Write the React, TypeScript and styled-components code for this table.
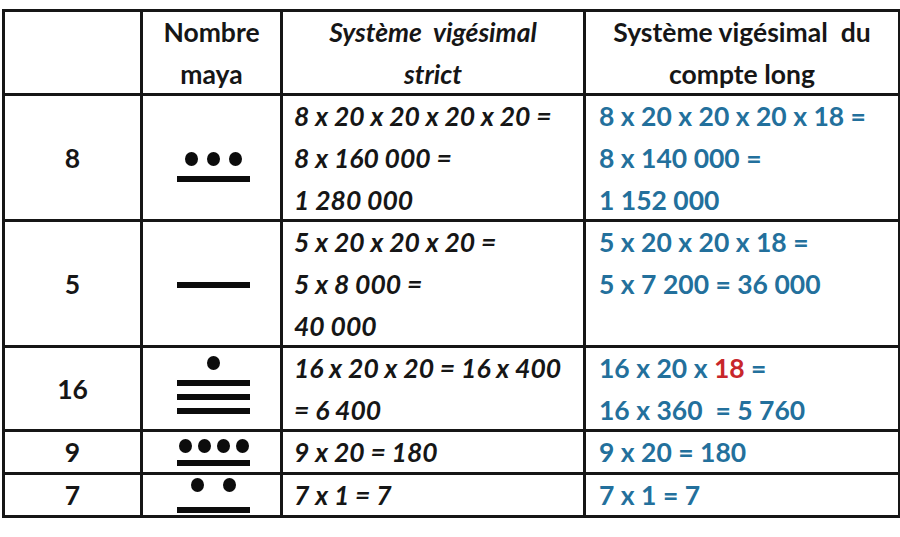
import React from "react";
import styled, { createGlobalStyle } from "styled-components";

const GlobalStyle = createGlobalStyle`
  body {
    margin: 0;
    background: #ffffff;
    font-family: Lato, "Open Sans", sans-serif;
  }
`;

const Table = styled.table`
  margin: 9px 0 0 2px;
  width: 896px;
  table-layout: fixed;
  border-collapse: collapse;
  border: 3px solid #161616;
  color: #161616;
  font-size: 26.5px;
  font-weight: 700;
`;

const HeadCell = styled.th<{ $italic?: boolean }>`
  border: 3px solid #161616;
  padding: 0;
  text-align: center;
  vertical-align: middle;
  font-weight: 700;
  font-style: ${(p) => (p.$italic ? "italic" : "normal")};
  white-space: nowrap;
`;

const NumberCell = styled.td`
  border: 3px solid #161616;
  padding: 0;
  text-align: center;
  vertical-align: middle;
  line-height: 40px;
`;

const GlyphCell = styled.td`
  border: 3px solid #161616;
  padding: 0;
  vertical-align: middle;
`;

const FormulaCell = styled.td<{ $italic?: boolean; $blue?: boolean }>`
  border: 3px solid #161616;
  padding: 0 0 0 ${(p) => (p.$blue ? 13 : 11)}px;
  vertical-align: top;
  font-style: ${(p) => (p.$italic ? "italic" : "normal")};
  color: ${(p) => (p.$blue ? "#23709c" : "#161616")};
  white-space: nowrap;
`;

const Line = styled.div`
  height: 42px;
  line-height: 40px;

  &:last-child {
    height: 39px;
  }
`;

const Red = styled.span`
  color: #c8262b;
`;

const Glyph = styled.div<{ $shift: number }>`
  display: flex;
  flex-direction: column;
  align-items: center;
  transform: translate(2px, ${(p) => p.$shift}px);
`;

const Dots = styled.div<{ $gap: number; $below: number }>`
  display: flex;
  gap: ${(p) => p.$gap}px;
  margin-bottom: ${(p) => p.$below}px;
`;

const Dot = styled.span`
  display: block;
  width: 13px;
  height: 14px;
  border-radius: 50%;
  background: #0c0c0c;
`;

const Bars = styled.div`
  display: flex;
  flex-direction: column;
  gap: 8px;
`;

const Bar = styled.span`
  display: block;
  width: 73px;
  height: 6px;
  background: #0c0c0c;
`;

interface MayaProps {
  dots: number;
  bars: number;
  dotGap: number;
  barGap: number;
  shift?: number;
}

interface Row {
  value: string;
  maya: MayaProps;
  strict: string[];
  long: React.ReactNode[];
}

const rows: Row[] = [
  {
    value: "8",
    maya: { dots: 3, bars: 1, dotGap: 9, barGap: 10, shift: 9 },
    strict: ["8 x 20 x 20 x 20 x 20 =", "8 x 160 000 =", "1 280 000"],
    long: ["8 x 20 x 20 x 20 x 18 =", "8 x 140 000 =", "1 152 000"],
  },
  {
    value: "5",
    maya: { dots: 0, bars: 1, dotGap: 0, barGap: 0, shift: 1 },
    strict: ["5 x 20 x 20 x 20 =", "5 x 8 000 =", "40 000"],
    long: ["5 x 20 x 20 x 18 =", "5 x 7 200 = 36 000", "\u00a0"],
  },
  {
    value: "16",
    maya: { dots: 1, bars: 3, dotGap: 0, barGap: 10, shift: -4 },
    strict: ["16 x 20 x 20 = 16 x 400", "= 6 400"],
    long: [
      <>
        16 x 20 x <Red>18</Red> =
      </>,
      "16 x 360 \u00a0= 5 760",
    ],
  },
  {
    value: "9",
    maya: { dots: 4, bars: 1, dotGap: 6, barGap: 7 },
    strict: ["9 x 20 = 180"],
    long: ["9 x 20 = 180"],
  },
  {
    value: "7",
    maya: { dots: 2, bars: 1, dotGap: 19, barGap: 15 },
    strict: ["7 x 1 = 7"],
    long: ["7 x 1 = 7"],
  },
];

const Maya: React.FC<MayaProps> = ({ dots, bars, dotGap, barGap, shift }) => {
  return (
    <Glyph $shift={shift ?? 0}>
      {dots > 0 && (
        <Dots $gap={dotGap} $below={barGap}>
          {Array.from({ length: dots }).map((_, i) => (
            <Dot key={i} />
          ))}
        </Dots>
      )}
      <Bars>
        {Array.from({ length: bars }).map((_, i) => (
          <Bar key={i} />
        ))}
      </Bars>
    </Glyph>
  );
};

export default function App() {
  return (
    <>
      <GlobalStyle />
      <Table>
        <colgroup>
          <col style={{ width: 138 }} />
          <col style={{ width: 140 }} />
          <col style={{ width: 303 }} />
          <col style={{ width: 315 }} />
        </colgroup>
        <thead>
          <tr>
            <HeadCell />
            <HeadCell>
              <Line>Nombre</Line>
              <Line>maya</Line>
            </HeadCell>
            <HeadCell $italic>
              <Line>Système&nbsp; vigésimal</Line>
              <Line>strict</Line>
            </HeadCell>
            <HeadCell>
              <Line>Système vigésimal&nbsp; du</Line>
              <Line>compte long</Line>
            </HeadCell>
          </tr>
        </thead>
        <tbody>
          {rows.map((row) => (
            <tr key={row.value}>
              <NumberCell>{row.value}</NumberCell>
              <GlyphCell>
                <Maya {...row.maya} />
              </GlyphCell>
              <FormulaCell $italic>
                {row.strict.map((line, i) => (
                  <Line key={i}>{line}</Line>
                ))}
              </FormulaCell>
              <FormulaCell $blue>
                {row.long.map((line, i) => (
                  <Line key={i}>{line}</Line>
                ))}
              </FormulaCell>
            </tr>
          ))}
        </tbody>
      </Table>
    </>
  );
}
